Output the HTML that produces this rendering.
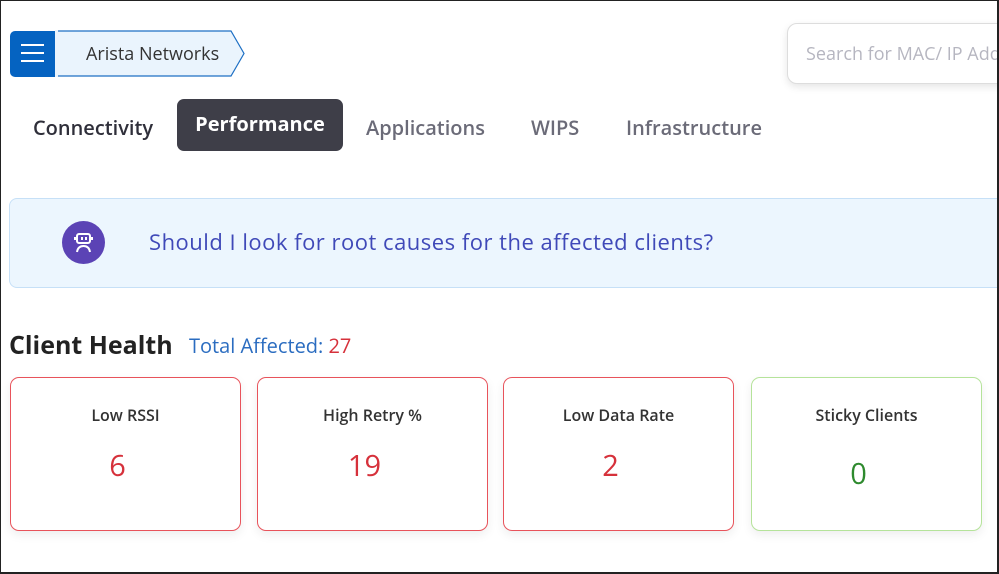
<!DOCTYPE html>
<html><head><meta charset="utf-8"><style>
*{box-sizing:border-box;margin:0;padding:0}
html,body{width:999px;height:574px;overflow:hidden;background:#fff}
body{position:relative;font-family:"Open Sans","Liberation Sans",sans-serif}
.a{position:absolute}
.card{position:absolute;top:377px;width:231px;height:154px;border:1px solid #e8535b;border-radius:9px;background:#fff;box-shadow:0 4px 10px rgba(0,0,0,.07);text-align:center}
.card .t{position:absolute;top:26px;width:100%;font-size:16px;font-weight:600;color:#333}
.card .n{position:absolute;top:68px;left:0;width:100%;padding-right:16px;font-size:29px;color:#d6313b}
.tab{position:absolute;top:114px;font-size:20px;font-weight:600;color:#6b6b78}
</style></head><body>
<div class="a" style="left:10px;top:31px;width:46px;height:46px;background:#0563c1;border-radius:5px 0 0 5px"></div>
<div class="a" style="left:21px;top:44px;width:23px;height:2px;background:#fff"></div>
<div class="a" style="left:21px;top:52px;width:23px;height:2px;background:#fff"></div>
<div class="a" style="left:21px;top:60px;width:23px;height:2px;background:#fff"></div>
<svg class="a" style="left:55px;top:30px" width="192" height="47"><path d="M0 1H176L189 23.5L176 46H0Z" fill="#eaf4fd" stroke="#1d6fc4" stroke-width="1.2"/><rect x="0" y="0" width="3" height="47" fill="#eaf4fd"/></svg>
<div class="a" style="left:86px;top:42px;font-size:18px;color:#333">Arista Networks</div>
<div class="a" style="left:787px;top:23px;width:230px;height:61px;border:1px solid #ddd;border-radius:10px;box-shadow:0 3px 8px rgba(0,0,0,.1);background:#fff"></div>
<div class="a" style="left:806px;top:42px;font-size:18px;color:#b6b6c0;white-space:nowrap">Search for MAC/ IP Address</div>
<div class="tab" style="left:33px;color:#2f2f3a">Connectivity</div>
<div class="a" style="left:177px;top:99px;width:166px;height:52px;background:#3e3e48;border-radius:7px"></div>
<div class="a" style="left:177px;top:110px;width:166px;text-align:center;font-size:20px;font-weight:bold;color:#fff">Performance</div>
<div class="tab" style="left:366px">Applications</div>
<div class="tab" style="left:531px">WIPS</div>
<div class="tab" style="left:626px">Infrastructure</div>
<div class="a" style="left:9px;top:198px;width:1000px;height:90px;background:#ecf6fe;border:1px solid #c6e0f7;border-radius:8px"></div>
<div class="a" style="left:62px;top:221px;width:43px;height:43px;border-radius:50%;background:#5b43b5"></div>
<svg class="a" style="left:62px;top:221px" width="43" height="43"><rect x="15" y="13" width="13" height="9" rx="2" fill="none" stroke="#fff" stroke-width="2"/><rect x="19" y="16" width="2" height="3" fill="#fff"/><rect x="23" y="16" width="2" height="3" fill="#fff"/><path d="M13 16v3M30 16v3" stroke="#fff" stroke-width="2"/><path d="M15 31q1-6 6.5-6t6.5 6" fill="none" stroke="#fff" stroke-width="2"/></svg>
<div class="a" style="left:149px;top:227px;font-size:22px;color:#3f49b8;letter-spacing:0.5px">Should I look for root causes for the affected clients?</div>
<div class="a" style="left:9px;top:328px;font-size:25px;font-weight:bold;color:#222">Client Health</div>
<div class="a" style="left:189px;top:332px;font-size:20px;color:#2a6cc0">Total Affected: <span style="color:#d6313b">27</span></div>
<div class="card" style="left:10px"><div class="t">Low RSSI</div><div class="n">6</div></div>
<div class="card" style="left:257px"><div class="t">High Retry %</div><div class="n">19</div></div>
<div class="card" style="left:503px"><div class="t">Low Data Rate</div><div class="n">2</div></div>
<div class="card" style="left:751px;border-color:#b5e39a"><div class="t">Sticky Clients</div><div class="n" style="top:76px;color:#2e8a2e">0</div></div>
<div class="a" style="left:0;top:0;width:999px;height:574px;border:1px solid #222;border-right-width:2px;border-bottom-width:2px;pointer-events:none"></div>
</body></html>
